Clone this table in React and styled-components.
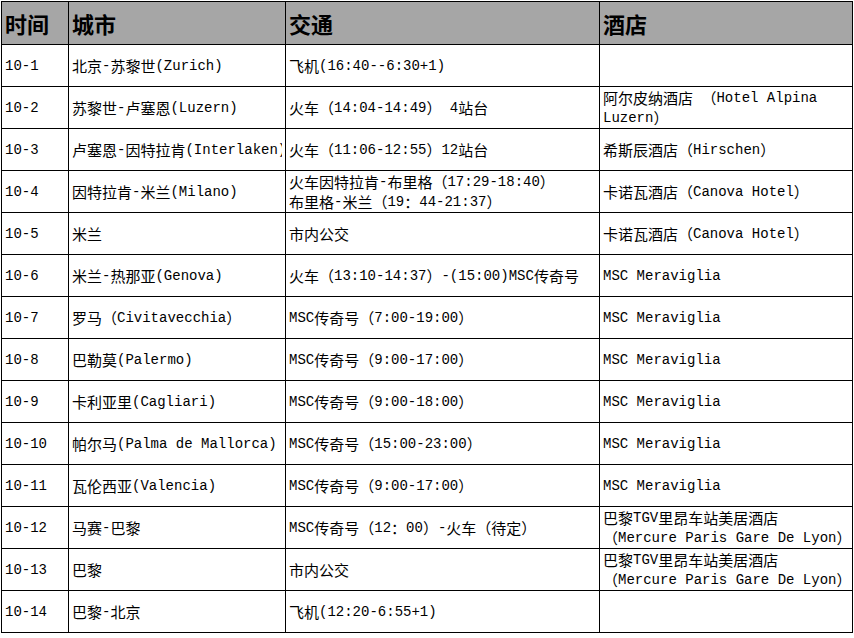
import React from 'react';
import styled, { createGlobalStyle } from 'styled-components';

const GlobalStyle = createGlobalStyle`
  html, body {
    margin: 0;
    padding: 0;
    background: #ffffff;
  }
`;

const Page = styled.div`
  padding: 1px 0 0 1px;
  background: #ffffff;
`;

const Table = styled.table`
  border-collapse: collapse;
  table-layout: fixed;
  width: 851px;
  font-family: "Noto Sans CJK SC", "Liberation Mono", sans-serif;
  color: #000;
`;

const HeadRow = styled.tr`
  height: 43px;
`;

const Row = styled.tr`
  height: 42px;
`;

const HeaderCell = styled.th`
  height: 42px;
  box-sizing: border-box;
  background: #a6a6a6;
  border: 1px solid #000;
  padding: 0 3px;
  text-align: left;
  vertical-align: middle;
  font-size: 22px;
  font-weight: 700;
  line-height: 26px;
  overflow: hidden;
  white-space: nowrap;
`;

const Cell = styled.td`
  height: 41px;
  box-sizing: border-box;
  border: 1px solid #000;
  padding: 0 3px;
  vertical-align: middle;
  font-size: 15px;
  line-height: 20px;
  overflow: hidden;
`;

const Line = styled.div`
  height: 20px;
  line-height: 20px;
  white-space: pre;
  overflow: hidden;
`;

const Latin = styled.span`
  font-family: "Liberation Mono", monospace;
  font-size: 14px;
  line-height: 20px;
  vertical-align: top;
`;

const Han = styled.span`
  line-height: 20px;
  vertical-align: top;
`;

const columns = [
  { title: '时间', width: 67 },
  { title: '城市', width: 217 },
  { title: '交通', width: 314 },
  { title: '酒店', width: 253 },
];

const mercure = ['巴黎TGV里昂车站美居酒店', '（Mercure Paris Gare De Lyon）'];

const rows = [
  ['10-1', '北京-苏黎世(Zurich)', '飞机(16:40--6:30+1)', ''],
  ['10-2', '苏黎世-卢塞恩(Luzern)', '火车（14:04-14:49） 4站台', ['阿尔皮纳酒店 （Hotel Alpina', 'Luzern）']],
  ['10-3', '卢塞恩-因特拉肯(Interlaken)', '火车（11:06-12:55）12站台', '希斯辰酒店（Hirschen）'],
  ['10-4', '因特拉肯-米兰(Milano)', ['火车因特拉肯-布里格（17:29-18:40）', '布里格-米兰（19：44-21:37）'], '卡诺瓦酒店（Canova Hotel）'],
  ['10-5', '米兰', '市内公交', '卡诺瓦酒店（Canova Hotel）'],
  ['10-6', '米兰-热那亚(Genova)', '火车（13:10-14:37）-(15:00)MSC传奇号', 'MSC Meraviglia'],
  ['10-7', '罗马（Civitavecchia）', 'MSC传奇号（7:00-19:00）', 'MSC Meraviglia'],
  ['10-8', '巴勒莫(Palermo)', 'MSC传奇号（9:00-17:00）', 'MSC Meraviglia'],
  ['10-9', '卡利亚里(Cagliari)', 'MSC传奇号（9:00-18:00）', 'MSC Meraviglia'],
  ['10-10', '帕尔马(Palma de Mallorca)', 'MSC传奇号（15:00-23:00）', 'MSC Meraviglia'],
  ['10-11', '瓦伦西亚(Valencia)', 'MSC传奇号（9:00-17:00）', 'MSC Meraviglia'],
  ['10-12', '马赛-巴黎', 'MSC传奇号（12：00）-火车（待定）', mercure],
  ['10-13', '巴黎', '市内公交', mercure],
  ['10-14', '巴黎-北京', '飞机(12:20-6:55+1)', ''],
];

// ascii runs get the narrow mono face, like the half-width glyphs of the original sheet
const renderText = (text) =>
  text.split(/([\x20-\x7e]+)/).filter(Boolean).map((part, i) =>
    /^[\x20-\x7e]+$/.test(part) ? <Latin key={i}>{part}</Latin> : <Han key={i}>{part}</Han>
  );

const CellContent = ({ value }) => {
  const lines = Array.isArray(value) ? value : [value];
  return lines.map((line, i) => <Line key={i}>{line ? renderText(line) : '\u00a0'}</Line>);
};

const App = () => (
  <Page>
    <GlobalStyle />
    <Table>
      <colgroup>
        {columns.map((c) => (
          <col key={c.title} style={{ width: c.width }} />
        ))}
      </colgroup>
      <thead>
        <HeadRow>
          {columns.map((c) => (
            <HeaderCell key={c.title}>{c.title}</HeaderCell>
          ))}
        </HeadRow>
      </thead>
      <tbody>
        {rows.map((row) => (
          <Row key={row[0]}>
            {row.map((value, i) => (
              <Cell key={i}>
                <CellContent value={value} />
              </Cell>
            ))}
          </Row>
        ))}
      </tbody>
    </Table>
  </Page>
);

export default App;
